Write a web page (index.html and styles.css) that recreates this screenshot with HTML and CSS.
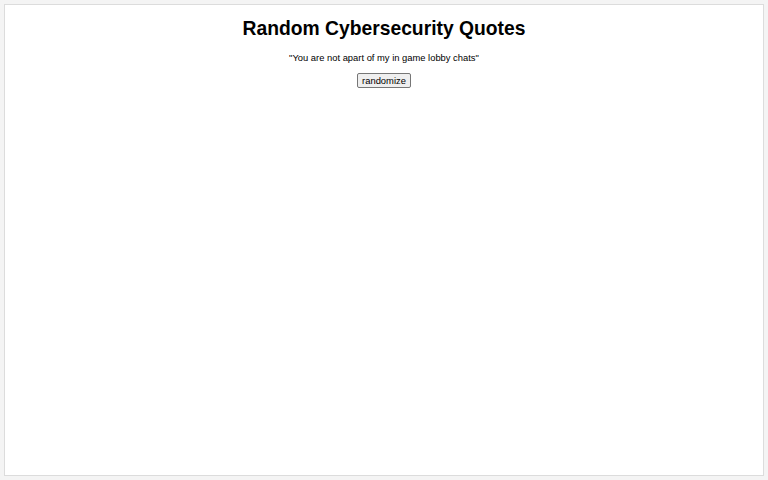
FILE: index.html
```html
<!DOCTYPE html>
<html lang="en">
<head>
    <meta charset="UTF-8">
    <meta name="viewport" content="width=device-width, initial-scale=1.0">
    <title>Random Cybersecurity Quotes</title>
    <link rel="stylesheet" href="styles.css">
</head>
<body>
    <div class="container">
        <h1>Random Cybersecurity Quotes</h1>

        <!-- Cita actual -->
        <p id="quote" class="quote">"You are not apart of my in game lobby chats"</p>

        <button id="randomBtn" type="button">randomize</button>
    </div>

    <script>
        const quote = document.getElementById('quote');
        const btn = document.getElementById('randomBtn');

        const quotes = [
            "You are not apart of my in game lobby chats",
            "There is no patch for human stupidity",
            "Passwords are like underwear: change them often",
            "The only secure computer is one that's unplugged"
        ];

        // Elegir una cita al azar
        btn.addEventListener('click', () => {
            const i = Math.floor(Math.random() * quotes.length);
            quote.textContent = '"' + quotes[i] + '"';
        });
    </script>
</body>
</html>
```

FILE: styles.css
```css
html, body {
    height: 100%;
}

body {
    font-family: "Liberation Sans", Arial, sans-serif;
    margin: 0;
    padding: 4px;
    box-sizing: border-box;
    background-color: #f4f4f4;
    color: #000000;
}

.container {
    height: 100%;
    box-sizing: border-box;
    background-color: #ffffff;
    border: 1px solid #dcdcdc;
    text-align: center;
    padding-top: 13px;
}

h1 {
    font-size: 19.3px;
    margin: 0 0 12px 0;
    line-height: 22px;
}

.quote {
    font-size: 9.4px;
    margin: 0 0 6px 0;
    line-height: 12px;
}

button {
    font-family: "Liberation Sans", Arial, sans-serif;
    font-size: 9.4px;
    padding: 1px 4px;
    line-height: 11px;
    background-color: #efefef;
    border: 1px solid #767676;
    border-radius: 2px;
    color: #000000;
    cursor: pointer;
}

button:hover {
    background-color: #e5e5e5;
}
```
